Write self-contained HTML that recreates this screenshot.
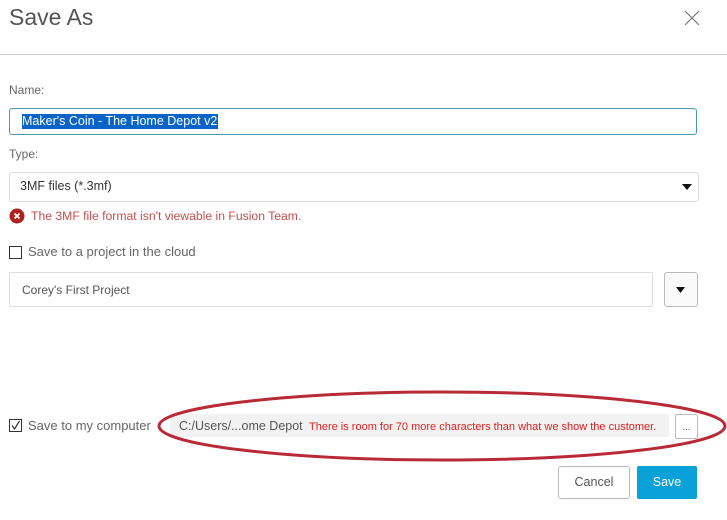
<!DOCTYPE html>
<html><head><style>
body{margin:0;width:727px;height:520px;background:#fff;font-family:"Liberation Sans",sans-serif;position:relative;overflow:hidden;color:#555}
.a{position:absolute}
.t{font-size:12px;color:#666}
</style></head><body>
<div class="a" style="left:9px;top:4px;font-size:23px;color:#555">Save As</div>
<svg class="a" style="left:684px;top:10px" width="16" height="16"><path d="M1 1L15 15M15 1L1 15" stroke="#777" stroke-width="1.2"/></svg>
<div class="a" style="left:0;top:54px;width:727px;height:1px;background:#d0d0d0"></div>
<div class="a t" style="left:9px;top:83px">Name:</div>
<div class="a" style="left:9px;top:108px;width:686px;height:25px;border:1px solid #4a9ab0;border-radius:3px"></div>
<div class="a" style="left:22px;top:114px;height:15px;background:#0a64c8;color:#fff;font-size:12.5px;line-height:15px;padding-right:1px">Maker's Coin - The Home Depot v2</div>
<div class="a t" style="left:9px;top:147px">Type:</div>
<div class="a" style="left:9px;top:172px;width:688px;height:28px;border:1px solid #ddd;border-radius:3px"></div>
<div class="a" style="left:20px;top:179px;font-size:12.5px;color:#333">3MF files (*.3mf)</div>
<svg class="a" style="left:682px;top:184px" width="10" height="7"><path d="M0 0H10L5 6Z" fill="#111"/></svg>
<svg class="a" style="left:9px;top:208px" width="16" height="16"><circle cx="8" cy="8" r="7.5" fill="#b02020"/><path d="M5.5 5.5L10.5 10.5M10.5 5.5L5.5 10.5" stroke="#fff" stroke-width="1.8"/></svg>
<div class="a" style="left:31px;top:209px;font-size:12.2px;color:#c0504d">The 3MF file format isn't viewable in Fusion Team.</div>
<div class="a" style="left:9px;top:246px;width:11px;height:11px;border:1px solid #333"></div>
<div class="a t" style="left:28px;top:244px;font-size:13px">Save to a project in the cloud</div>
<div class="a" style="left:9px;top:272px;width:642px;height:33px;border:1px solid #ddd;border-radius:2px"></div>
<div class="a" style="left:22px;top:283px;font-size:12px;color:#555">Corey's First Project</div>
<div class="a" style="left:664px;top:272px;width:32px;height:33px;border:1px solid #bbb;border-radius:3px;background:#fafafa"></div>
<svg class="a" style="left:676px;top:287px" width="9" height="6"><path d="M0 0H9L4.5 6Z" fill="#111"/></svg>
<svg class="a" style="left:9px;top:419px" width="14" height="14"><rect x="0.5" y="0.5" width="12" height="12" fill="none" stroke="#333"/><path d="M3 6.5L5.5 10L10.5 2" fill="none" stroke="#333" stroke-width="1.2"/></svg>
<div class="a t" style="left:28px;top:418px;font-size:13px">Save to my computer</div>
<div class="a" style="left:170px;top:414px;width:499px;height:23px;background:#f2f2f2"></div>
<div class="a" style="left:179px;top:419px;font-size:12.5px;color:#555">C:/Users/...ome Depot</div>
<div class="a" style="left:309px;top:421px;font-size:11px;color:#e02020">There is room for 70 more characters than what we show the customer.</div>
<div class="a" style="left:675px;top:414px;width:21px;height:23px;border:1px solid #bbb;border-radius:2px;background:#fff;font-size:9px;text-align:center;line-height:24px;color:#555">...</div>
<svg class="a" style="left:0;top:385px" width="727" height="85"><ellipse cx="442" cy="41" rx="283" ry="34" fill="none" stroke="#b82a35" stroke-width="3"/></svg>
<div class="a" style="left:558px;top:466px;width:70px;height:31px;border:1px solid #bbb;border-radius:3px;text-align:center;line-height:31px;font-size:12.5px;color:#555">Cancel</div>
<div class="a" style="left:637px;top:466px;width:60px;height:33px;background:#0aa0d8;border-radius:2px;text-align:center;line-height:33px;font-size:12.5px;color:#fff">Save</div>
</body></html>
